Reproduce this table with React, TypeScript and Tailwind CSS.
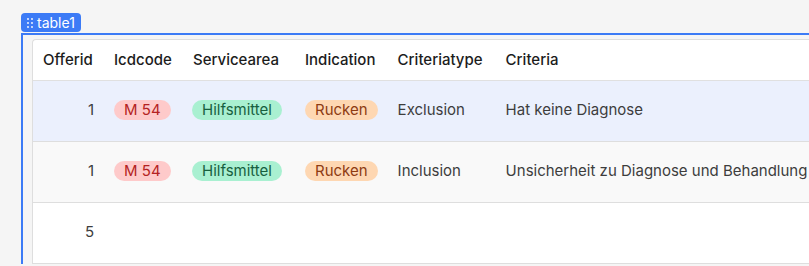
import React from 'react'

type Row = {
  offerid: number
  icdcode?: string
  servicearea?: string
  indication?: string
  criteriatype?: string
  criteria?: string
}

const rows: Row[] = [
  { offerid: 1, icdcode: 'M 54', servicearea: 'Hilfsmittel', indication: 'Rucken', criteriatype: 'Exclusion', criteria: 'Hat keine Diagnose' },
  { offerid: 1, icdcode: 'M 54', servicearea: 'Hilfsmittel', indication: 'Rucken', criteriatype: 'Inclusion', criteria: 'Unsicherheit zu Diagnose und Behandlung' },
  { offerid: 5 },
]

const rowBg = ['bg-[#ebf0fd]', 'bg-[#f9f9f9]', 'bg-white']

const Tag: React.FC<{ className: string; children: React.ReactNode }> = ({ className, children }) => (
  <span className={`inline-flex items-center h-[20px] px-[10px] rounded-full leading-none ${className}`}>
    {children}
  </span>
)

const DragDots = () => (
  <svg width="6" height="10" viewBox="0 0 6 10" className="mr-[4px]">
    {[0, 4, 8].map((y) => (
      <g key={y}>
        <circle cx="1" cy={y + 1} r="0.9" fill="white" />
        <circle cx="5" cy={y + 1} r="0.9" fill="white" />
      </g>
    ))}
  </svg>
)

export default function App() {
  return (
    <div className="w-[809px] h-[266px] overflow-hidden bg-[#f5f5f5] font-[Inter] text-[15px]">
      <div className="pt-[13px] pl-[21px]">
        <div className="flex w-fit items-center h-[19px] pl-[6px] pr-[6px] rounded-[4px] bg-[#3c7bf6] text-white text-[14px] leading-none">
          <DragDots />
          table1
        </div>
        <div className="mt-[1px] w-[900px] border-l-2 border-t-2 border-[#3c7bf6] pl-[9px] pt-[4px]">
          <div className="bg-white border-l border-t border-[#dedede] rounded-tl-[4px] overflow-hidden">
            <table className="border-collapse text-left">
              <thead>
                <tr className="h-[40px] border-b border-[#e0e0e0] text-[#1c1c1c]">
                  <th className="w-[71px] px-[10px] font-medium">Offerid</th>
                  <th className="w-[79px] px-[10px] font-medium">Icdcode</th>
                  <th className="w-[112px] px-[10px] font-medium">Servicearea</th>
                  <th className="w-[92px] px-[10px] font-medium">Indication</th>
                  <th className="w-[108px] px-[10px] font-medium">Criteriatype</th>
                  <th className="w-[400px] px-[10px] font-medium">Criteria</th>
                </tr>
              </thead>
              <tbody className="text-[#3d3d3d]">
                {rows.map((r, i) => (
                  <tr key={i} className={`h-[61px] border-b border-[#dedede] ${rowBg[i]}`}>
                    <td className="px-[10px] text-right">{r.offerid}</td>
                    <td className="px-[10px]">
                      {r.icdcode && <Tag className="bg-[#fecaca] text-[#b42323]">{r.icdcode}</Tag>}
                    </td>
                    <td className="px-[9px]">
                      {r.servicearea && <Tag className="bg-[#a9f0d1] text-[#17603f]">{r.servicearea}</Tag>}
                    </td>
                    <td className="px-[10px]">
                      {r.indication && <Tag className="bg-[#fed7b2] text-[#8e3b12]">{r.indication}</Tag>}
                    </td>
                    <td className="px-[10px]">{r.criteriatype}</td>
                    <td className="px-[10px] whitespace-nowrap">{r.criteria}</td>
                  </tr>
                ))}
              </tbody>
            </table>
          </div>
        </div>
      </div>
    </div>
  )
}
